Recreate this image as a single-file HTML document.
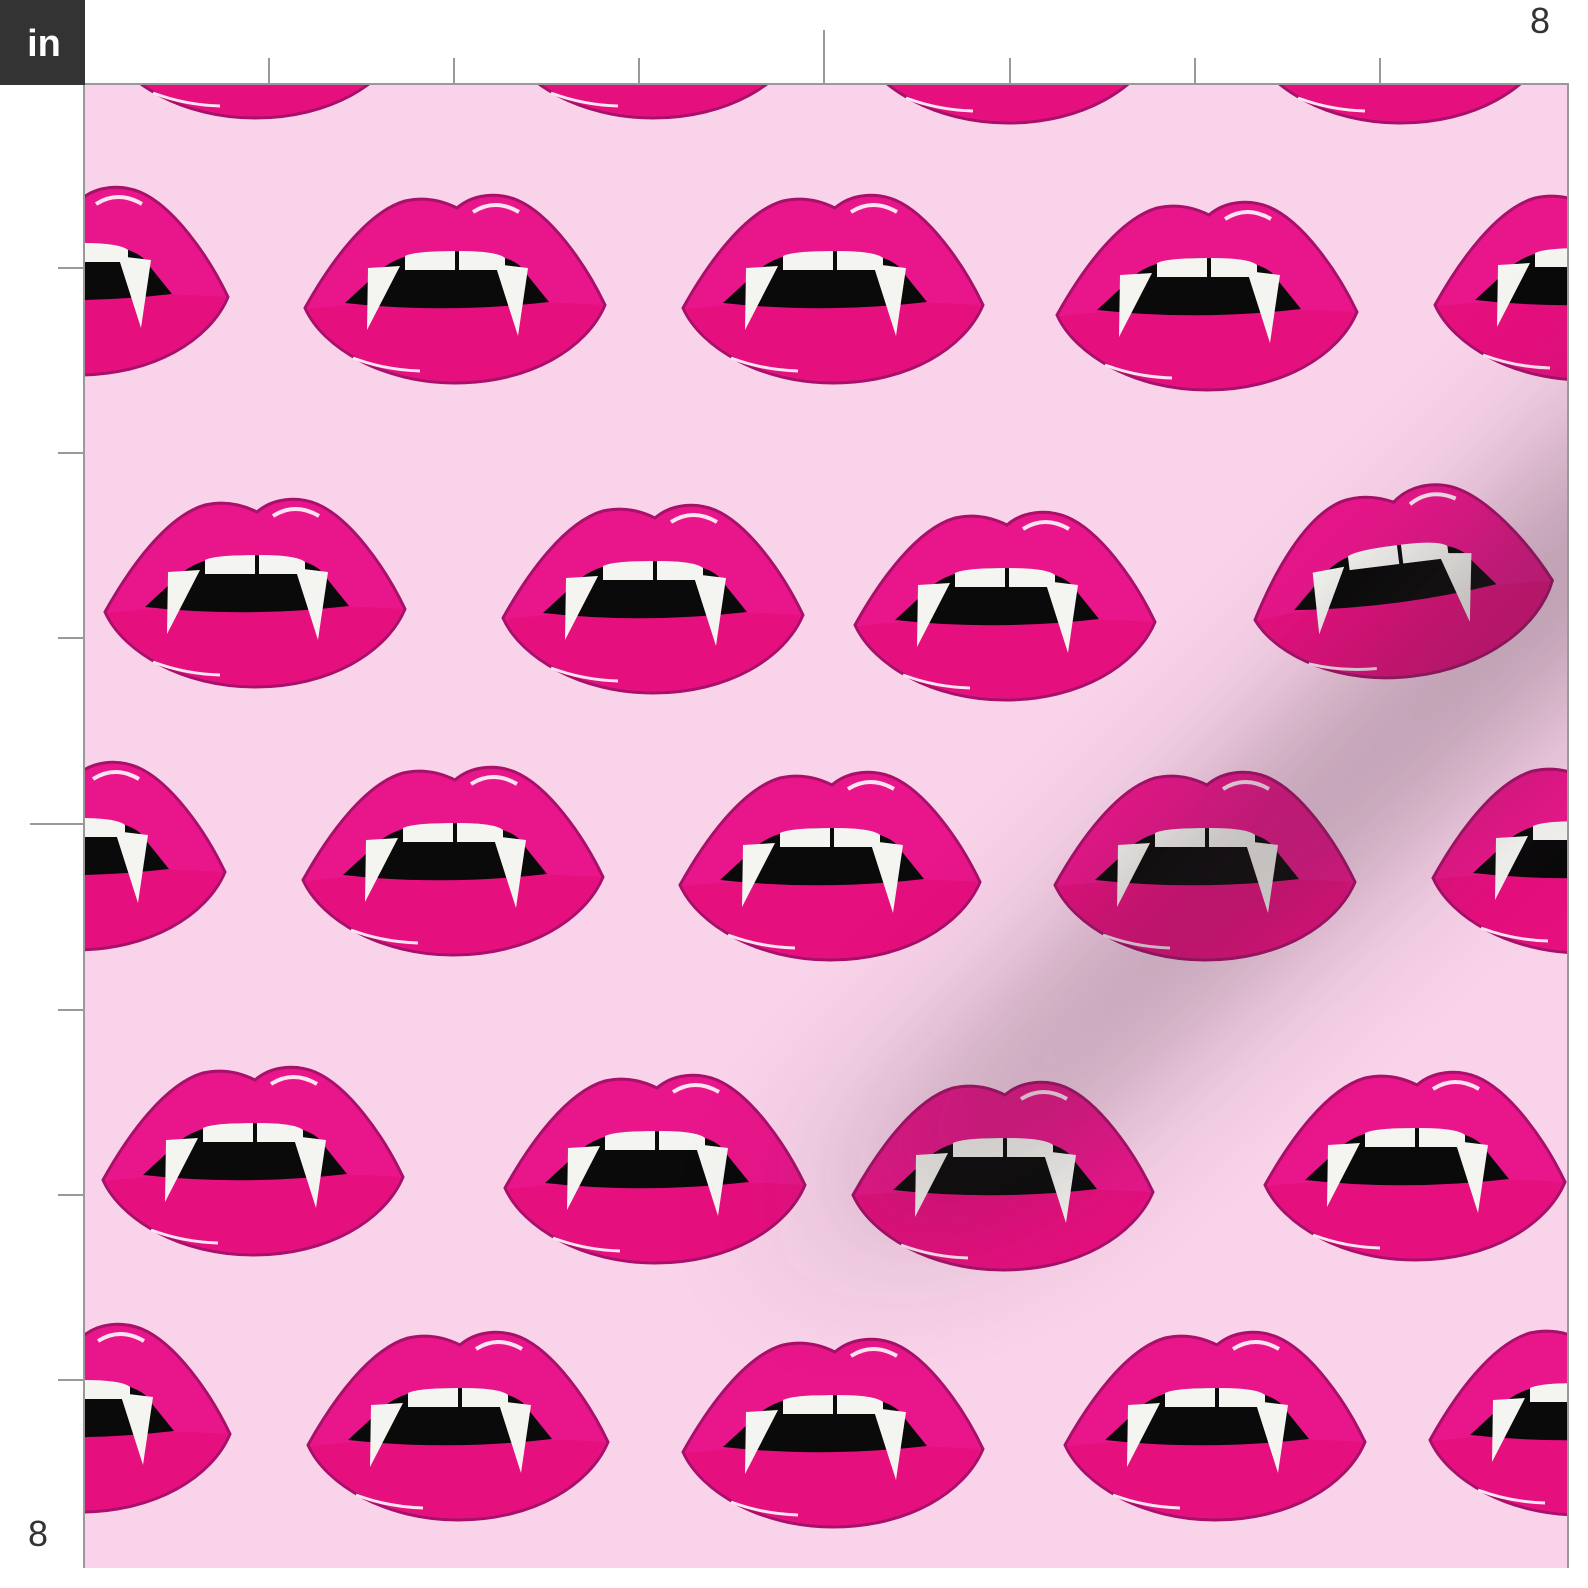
<!DOCTYPE html>
<html><head><meta charset="utf-8"><style>
html,body{margin:0;padding:0;background:#fff;width:1588px;height:1588px;overflow:hidden}
svg{display:block}
</style></head><body>
<svg width="1588" height="1588" xmlns="http://www.w3.org/2000/svg">
<defs>
<g id="lip">
<path d="M0,0 C25,-45 62,-96 100,-107 C122,-112 140,-106 152,-100 C168,-114 192,-116 212,-108 C245,-94 280,-45 300,-3 C282,40 225,75 150,75 C78,75 18,40 0,0Z" fill="#e8168a" stroke="#a8106a" stroke-width="3"/>
<path d="M3,1 C80,-8 220,-8 297,-3 C280,40 225,73 150,73 C80,73 20,38 3,1Z" fill="#e60f7e"/>
<path d="M40,-5 L78,-40 Q98,-56 140,-57 Q198,-57 215,-42 L244,-6 Q140,6 40,-5Z" fill="#0a0a0a"/>
<path d="M100,-38 L100,-52 Q110,-57 150,-57 L150,-38Z M154,-38 L154,-57 Q192,-57 200,-50 L200,-38Z" fill="#f4f4f0"/>
<path d="M63,-40 L95,-42 L62,22Z" fill="#f4f4f0"/>
<path d="M190,-44 L223,-40 L213,28Z" fill="#f4f4f0"/>
<path d="M168,-96 Q190,-110 214,-96" fill="none" stroke="#fbe3f0" stroke-width="4"/>
<path d="M48,50 Q80,62 115,63" fill="none" stroke="#fbe3f0" stroke-width="3"/>
</g>
<filter id="bl" x="-50%" y="-50%" width="200%" height="200%"><feGaussianBlur stdDeviation="80"/></filter>
<clipPath id="cp"><rect x="85" y="85" width="1483" height="1483"/></clipPath>
</defs>
<g clip-path="url(#cp)">
<rect x="85" y="85" width="1483" height="1483" fill="#f9d3ea"/>
<use href="#lip" x="105" y="43"/><use href="#lip" x="503" y="43"/><use href="#lip" x="858" y="48"/><use href="#lip" x="1250" y="48"/>
<use href="#lip" x="-72" y="300"/><use href="#lip" x="305" y="308"/><use href="#lip" x="683" y="308"/><use href="#lip" x="1057" y="315"/><use href="#lip" x="1435" y="305"/>
<use href="#lip" x="105" y="612"/><use href="#lip" x="503" y="618"/><use href="#lip" x="855" y="625"/><use href="#lip" transform="translate(1255,620) rotate(-7)"/>
<use href="#lip" x="-75" y="875"/><use href="#lip" x="303" y="880"/><use href="#lip" x="680" y="885"/><use href="#lip" x="1055" y="885"/><use href="#lip" x="1433" y="878"/>
<use href="#lip" x="103" y="1180"/><use href="#lip" x="505" y="1188"/><use href="#lip" x="853" y="1195"/><use href="#lip" x="1265" y="1185"/>
<use href="#lip" x="-70" y="1437"/><use href="#lip" x="308" y="1445"/><use href="#lip" x="683" y="1452"/><use href="#lip" x="1065" y="1445"/><use href="#lip" x="1430" y="1440"/>
<path d="M1700,330 L1700,560 L1000,1180 L780,1250 Z" fill="#3a2a35" opacity="0.42" filter="url(#bl)"/>
</g>
<rect x="0" y="0" width="1588" height="85" fill="#fff"/>
<rect x="0" y="0" width="85" height="1588" fill="#fff"/>
<rect x="1568" y="0" width="20" height="1588" fill="#fff"/>
<rect x="0" y="1568" width="1588" height="20" fill="#fff"/>
<rect x="0" y="0" width="85" height="85" fill="#333"/>
<text x="44" y="56" font-family="Liberation Sans, sans-serif" font-size="38" font-weight="bold" fill="#fff" text-anchor="middle">in</text>
<g stroke="#999" stroke-width="2" fill="none">
<path d="M85,84 H1568 V1568 M84,85 V1568"/>
<path d="M269,58V84 M454,58V84 M639,58V84 M824,30V84 M1010,58V84 M1195,58V84 M1380,58V84"/>
<path d="M58,268H84 M58,453H84 M58,638H84 M30,824H84 M58,1010H84 M58,1195H84 M58,1380H84"/>
</g>
<text x="1550" y="33" font-family="Liberation Sans, sans-serif" font-size="36" fill="#333" text-anchor="end">8</text>
<text x="38" y="1546" font-family="Liberation Sans, sans-serif" font-size="36" fill="#333" text-anchor="middle">8</text>
</svg>
</body></html>
